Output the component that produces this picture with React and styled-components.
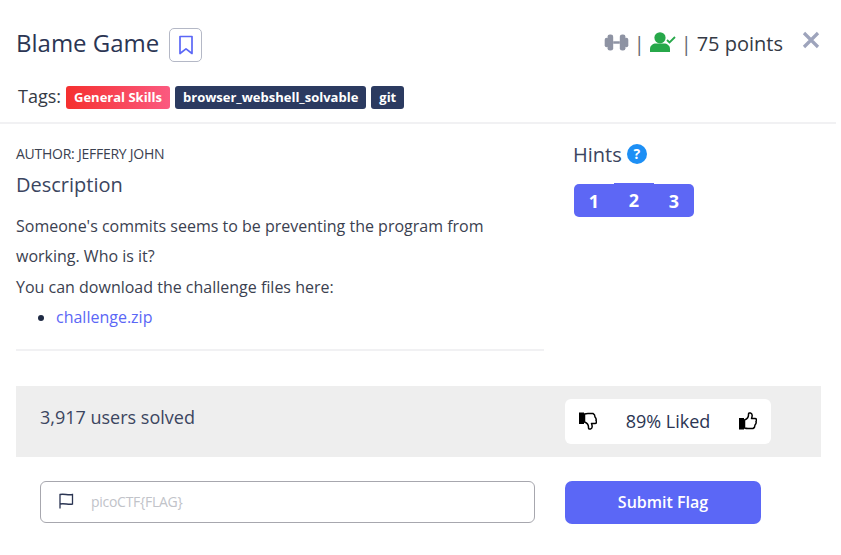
import React from "react";
import styled, { createGlobalStyle } from "styled-components";

const Global = createGlobalStyle`
  html, body { margin: 0; padding: 0; background: #fff; }
  body { font-family: "Open Sans", sans-serif; color: #2b3553; }
  * { box-sizing: border-box; }
`;

const Page = styled.div`
  width: 841px;
  height: 555px;
  overflow: hidden;
`;
const Header = styled.header`
  width: 836px;
  height: 124px;
  border-bottom: 2px solid #f1f1f3;
  padding: 0 16px;
`;
const TitleRow = styled.div`
  display: flex;
  justify-content: space-between;
  align-items: flex-start;
  padding-top: 28px;
  height: 78px;
`;
const TitleGroup = styled.div`
  display: flex;
  align-items: flex-start;
  gap: 10px;
`;
const Title = styled.h1`
  margin: -2px 0 0;
  font-size: 24px;
  line-height: 33px;
  font-weight: 400;
  color: #2b3553;
`;
const BookmarkButton = styled.button`
  width: 33px;
  height: 34px;
  padding: 0;
  display: flex;
  align-items: center;
  justify-content: center;
  background: #fff;
  border: 1px solid #b4b8c6;
  border-radius: 5px;
`;
const Meta = styled.div`
  display: flex;
  align-items: center;
  gap: 5px;
  font-size: 20px;
  line-height: 27px;
  color: #343a45;
  margin-top: 2px;
`;
const MetaIcon = styled.svg`
  margin-bottom: 3px;
`;
const Sep = styled.span`
  color: #60656f;
`;
const Close = styled.span`
  display: flex;
  margin-left: 14px;
  margin-top: -7px;
`;
const TagRow = styled.div`
  display: flex;
  align-items: center;
  height: 24px;
  margin-top: 7px;
`;
const TagLabel = styled.span`
  font-size: 18px;
  line-height: 24px;
  color: #343a45;
  margin: -2px 5px 0 2px;
`;
const Tag = styled.span`
  height: 23px;
  display: inline-flex;
  align-items: center;
  padding: 0 8px;
  margin-right: 5px;
  border-radius: 3px;
  color: #fff;
  font-size: 13px;
  font-weight: 700;
  background: ${(p) => (p.$hot ? "linear-gradient(90deg,#f5302f,#fb5a80)" : "#2b3a60")};
`;
const Body = styled.div`
  display: flex;
  padding: 0 0 0 16px;
  height: 262px;
`;
const Left = styled.section`
  width: 528px;
  height: 227px;
  border-bottom: 2px solid #f1f1f3;
  padding-top: 20px;
`;
const Author = styled.div`
  font-size: 14px;
  line-height: 19px;
  letter-spacing: -0.25px;
  color: #3b4150;
`;
const Description = styled.h2`
  margin: 8px 0 0;
  font-size: 20px;
  line-height: 27px;
  font-weight: 400;
  color: #3b4560;
`;
const Para = styled.p`
  margin: 13px 0 0;
  font-size: 16px;
  line-height: 30.4px;
  color: #3b4150;
  & + & { margin-top: 0; }
`;
const List = styled.ul`
  margin: 0;
  padding: 0 0 0 40px;
  font-size: 16px;
  line-height: 30.4px;
  color: #1f2a44;
`;
const FileLink = styled.a`
  color: #5b67f6;
  text-decoration: none;
`;
const Right = styled.aside`
  margin-left: 29px;
  padding-top: 17px;
`;
const HintsHead = styled.div`
  display: flex;
  align-items: center;
  gap: 5px;
  font-size: 20px;
  line-height: 27px;
  color: #3b4560;
`;
const HelpDot = styled.span`
  width: 20px;
  height: 20px;
  border-radius: 50%;
  background: #1d8ff5;
  color: #fff;
  font-size: 14px;
  font-weight: 700;
  display: flex;
  align-items: center;
  justify-content: center;
  margin-bottom: 2px;
`;
const HintGroup = styled.div`
  display: flex;
  align-items: flex-end;
  margin: 15px 0 0 1px;
`;
const Hint = styled.button`
  width: 40px;
  height: ${(p) => (p.$mid ? 34 : 33)}px;
  border: 0;
  padding: 0;
  color: #fff;
  background: #5d67f5;
  font-family: inherit;
  font-size: 18px;
  font-weight: 700;
  border-radius: ${(p) => p.$r || "0"};
`;
const SolvedBar = styled.div`
  margin: 0 20px 0 16px;
  height: 71px;
  background: #eeeeee;
  display: flex;
  align-items: center;
  padding-left: 24px;
`;
const Solved = styled.div`
  width: 525px;
  font-size: 18px;
  line-height: 24px;
  color: #3b4560;
  margin-bottom: 10px;
`;
const LikeCard = styled.div`
  width: 206px;
  height: 45px;
  background: #fff;
  border-radius: 6px;
  display: flex;
  align-items: center;
  justify-content: space-between;
  padding: 0 14px 2px;
  font-size: 18px;
  color: #2b3553;
`;
const FlagRow = styled.form`
  display: flex;
  margin-top: 24px;
  padding-left: 40px;
`;
const FlagField = styled.div`
  width: 495px;
  height: 42px;
  border: 1px solid #a7a7ae;
  border-radius: 6px;
  display: flex;
  align-items: center;
  padding: 0 0 2px 17px;
`;
const Placeholder = styled.span`
  margin-left: 17px;
  font-size: 14px;
  color: #c1c3c9;
  letter-spacing: -0.28px;
`;
const Submit = styled.button`
  width: 196px;
  height: 43px;
  margin-left: 30px;
  padding: 0 0 2px;
  border: 0;
  border-radius: 7px;
  color: #fff;
  background: #5b67f6;
  font-family: inherit;
  font-size: 16px;
  font-weight: 600;
`;
const ThumbIcon = styled.svg`
  transform: ${(p) => (p.$down ? "scaleY(-1)" : "none")};
`;

const Thumb = ({ down }) => (
  <ThumbIcon $down={down} width="18" height="18" viewBox="0 0 18 18">
    <rect x="0" y="6" width="5" height="11.500" fill="#000" />
    <path
      d="M5.500 8C8 7 9.500 5 9.500 3V2C9.500 1 10.500.8 11.500 1C13.500 1.500 13.500 4 12.500 6.500H16C17.500 6.500 18 8 17 9.500C17.500 11 17 12 16 13C16 15 15 16 14 16.500H9C8 16.500 7 16.500 5.500 16Z"
      fill="none"
      stroke="#000"
      strokeWidth="1.500"
      strokeLinejoin="round"
    />
  </ThumbIcon>
);

export default function App() {
  return (
    <Page>
      <Global />
      <Header>
        <TitleRow>
          <TitleGroup>
            <Title>Blame Game</Title>
            <BookmarkButton aria-label="bookmark">
              <svg width="16" height="20" viewBox="0 0 16 20" fill="none" stroke="#5b67f6" strokeWidth="1.7">
                <path d="M2 1.500h12v17l-6-4.600-6 4.600z" strokeLinejoin="round" />
              </svg>
            </BookmarkButton>
          </TitleGroup>
          <Meta>
            <MetaIcon width="25" height="17" viewBox="0 0 25 18" fill="#8e93a3">
              <rect x="0" y="4" width="4" height="10" rx="2" />
              <rect x="3" y="0.500" width="6" height="17" rx="2.500" />
              <rect x="9" y="7.700" width="7" height="2.600" />
              <rect x="16" y="0.500" width="6" height="17" rx="2.500" />
              <rect x="21" y="4" width="4" height="10" rx="2" />
            </MetaIcon>
            <Sep>|</Sep>
            <MetaIcon width="26" height="20" viewBox="0 0 26 20">
              <circle cx="10" cy="5.800" r="5.600" fill="#27a84a" />
              <path d="M0 20v-3c0-3.600 3-5.500 6-5.500h8c3 0 6 1.900 6 5.500v3z" fill="#27a84a" />
              <path d="M17 8l2.500 2.500 5.500-5.500" stroke="#27a84a" strokeWidth="1.800" fill="none" />
            </MetaIcon>
            <Sep>|</Sep>
            <span>75 points</span>
            <Close>
              <svg width="18" height="18" viewBox="0 0 18 18" stroke="#9ea4bc" strokeWidth="3.200">
                <path d="M2 2l14 14M16 2L2 16" />
              </svg>
            </Close>
          </Meta>
        </TitleRow>
        <TagRow>
          <TagLabel>Tags:</TagLabel>
          <Tag $hot>General Skills</Tag>
          <Tag>browser_webshell_solvable</Tag>
          <Tag>git</Tag>
        </TagRow>
      </Header>
      <Body>
        <Left>
          <Author>AUTHOR: JEFFERY JOHN</Author>
          <Description>Description</Description>
          <Para>Someone's commits seems to be preventing the program from working. Who is it?</Para>
          <Para>You can download the challenge files here:</Para>
          <List>
            <li><FileLink href="#">challenge.zip</FileLink></li>
          </List>
        </Left>
        <Right>
          <HintsHead>
            Hints
            <HelpDot>?</HelpDot>
          </HintsHead>
          <HintGroup>
            <Hint $r="5px 0 0 5px">1</Hint>
            <Hint $mid>2</Hint>
            <Hint $r="0 5px 5px 0">3</Hint>
          </HintGroup>
        </Right>
      </Body>
      <SolvedBar>
        <Solved>3,917 users solved</Solved>
        <LikeCard>
          <Thumb down />
          <span>89% Liked</span>
          <Thumb />
        </LikeCard>
      </SolvedBar>
      <FlagRow>
        <FlagField>
          <svg width="16" height="16" viewBox="0 0 16 16" fill="none" stroke="#2b3553" strokeWidth="1.300">
            <path d="M2 15.500V1.500c4-1 8 1 12.500 0v9.500c-4 1-8-1-12.500 0" />
          </svg>
          <Placeholder>picoCTF{"{FLAG}"}</Placeholder>
        </FlagField>
        <Submit type="button">Submit Flag</Submit>
      </FlagRow>
    </Page>
  );
}
